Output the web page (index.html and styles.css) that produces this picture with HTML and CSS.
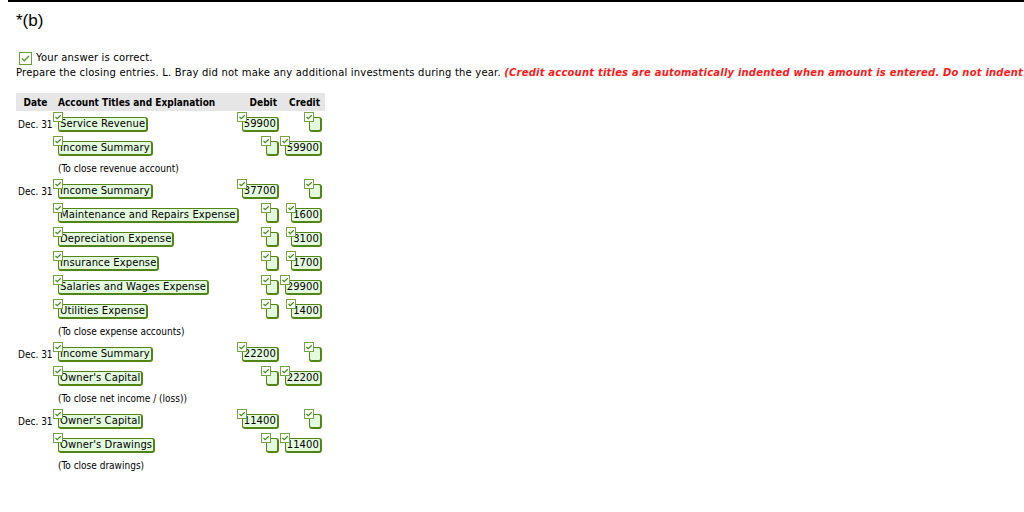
FILE: index.html
```html
<!DOCTYPE html>
<html>
<head>
<meta charset="utf-8">
<link rel="stylesheet" href="styles.css">
</head>
<body>
<div class="page">
  <h2 class="part">*(b)</h2>
  <div class="status">
    <svg class="bigcheck" width="13" height="13" viewBox="0 0 13 13"><rect x="0.5" y="0.5" width="12" height="12" fill="#fff" stroke="#6b9d37"/><path d="M3 6.5 L5.3 8.8 L10 4" fill="none" stroke="#4f9a2a" stroke-width="1.3"/></svg>
    <span>Your answer is correct.</span>
  </div>
  <div class="prompt">Prepare the closing entries. L. Bray did not make any additional investments during the year. <em class="note">(Credit account titles are automatically indented when amount is entered. Do not indent manually.)</em></div>

  <div class="journal">
    <div class="row head">
      <div class="c-date">Date</div>
      <div class="c-acct">Account Titles and Explanation</div>
      <div class="c-money">Debit</div>
      <div class="c-money">Credit</div>
    </div>

    <!-- Entry 1 -->
    <div class="row">
      <div class="c-date">Dec. 31</div>
      <div class="c-acct"><span class="field"><svg class="ok" viewBox="0 0 10 10"><rect x="0.5" y="0.5" width="9" height="9"/><path d="M2.5 5 L4.2 6.7 L7.8 3.2"/></svg>Service Revenue</span></div>
      <div class="c-money"><span class="field"><svg class="ok" viewBox="0 0 10 10"><rect x="0.5" y="0.5" width="9" height="9"/><path d="M2.5 5 L4.2 6.7 L7.8 3.2"/></svg>59900</span></div>
      <div class="c-money"><span class="field empty"><svg class="ok" viewBox="0 0 10 10"><rect x="0.5" y="0.5" width="9" height="9"/><path d="M2.5 5 L4.2 6.7 L7.8 3.2"/></svg></span></div>
    </div>
    <div class="row">
      <div class="c-date"></div>
      <div class="c-acct"><span class="field"><svg class="ok" viewBox="0 0 10 10"><rect x="0.5" y="0.5" width="9" height="9"/><path d="M2.5 5 L4.2 6.7 L7.8 3.2"/></svg>Income Summary</span></div>
      <div class="c-money"><span class="field empty"><svg class="ok" viewBox="0 0 10 10"><rect x="0.5" y="0.5" width="9" height="9"/><path d="M2.5 5 L4.2 6.7 L7.8 3.2"/></svg></span></div>
      <div class="c-money"><span class="field"><svg class="ok" viewBox="0 0 10 10"><rect x="0.5" y="0.5" width="9" height="9"/><path d="M2.5 5 L4.2 6.7 L7.8 3.2"/></svg>59900</span></div>
    </div>
    <div class="row expl"><div></div><div class="c-acct">(To close revenue account)</div></div>

    <!-- Entry 2 -->
    <div class="row">
      <div class="c-date">Dec. 31</div>
      <div class="c-acct"><span class="field"><svg class="ok" viewBox="0 0 10 10"><rect x="0.5" y="0.5" width="9" height="9"/><path d="M2.5 5 L4.2 6.7 L7.8 3.2"/></svg>Income Summary</span></div>
      <div class="c-money"><span class="field"><svg class="ok" viewBox="0 0 10 10"><rect x="0.5" y="0.5" width="9" height="9"/><path d="M2.5 5 L4.2 6.7 L7.8 3.2"/></svg>37700</span></div>
      <div class="c-money"><span class="field empty"><svg class="ok" viewBox="0 0 10 10"><rect x="0.5" y="0.5" width="9" height="9"/><path d="M2.5 5 L4.2 6.7 L7.8 3.2"/></svg></span></div>
    </div>
    <div class="row">
      <div class="c-date"></div>
      <div class="c-acct"><span class="field"><svg class="ok" viewBox="0 0 10 10"><rect x="0.5" y="0.5" width="9" height="9"/><path d="M2.5 5 L4.2 6.7 L7.8 3.2"/></svg>Maintenance and Repairs Expense</span></div>
      <div class="c-money"><span class="field empty"><svg class="ok" viewBox="0 0 10 10"><rect x="0.5" y="0.5" width="9" height="9"/><path d="M2.5 5 L4.2 6.7 L7.8 3.2"/></svg></span></div>
      <div class="c-money"><span class="field"><svg class="ok" viewBox="0 0 10 10"><rect x="0.5" y="0.5" width="9" height="9"/><path d="M2.5 5 L4.2 6.7 L7.8 3.2"/></svg>1600</span></div>
    </div>
    <div class="row">
      <div class="c-date"></div>
      <div class="c-acct"><span class="field"><svg class="ok" viewBox="0 0 10 10"><rect x="0.5" y="0.5" width="9" height="9"/><path d="M2.5 5 L4.2 6.7 L7.8 3.2"/></svg>Depreciation Expense</span></div>
      <div class="c-money"><span class="field empty"><svg class="ok" viewBox="0 0 10 10"><rect x="0.5" y="0.5" width="9" height="9"/><path d="M2.5 5 L4.2 6.7 L7.8 3.2"/></svg></span></div>
      <div class="c-money"><span class="field"><svg class="ok" viewBox="0 0 10 10"><rect x="0.5" y="0.5" width="9" height="9"/><path d="M2.5 5 L4.2 6.7 L7.8 3.2"/></svg>3100</span></div>
    </div>
    <div class="row">
      <div class="c-date"></div>
      <div class="c-acct"><span class="field"><svg class="ok" viewBox="0 0 10 10"><rect x="0.5" y="0.5" width="9" height="9"/><path d="M2.5 5 L4.2 6.7 L7.8 3.2"/></svg>Insurance Expense</span></div>
      <div class="c-money"><span class="field empty"><svg class="ok" viewBox="0 0 10 10"><rect x="0.5" y="0.5" width="9" height="9"/><path d="M2.5 5 L4.2 6.7 L7.8 3.2"/></svg></span></div>
      <div class="c-money"><span class="field"><svg class="ok" viewBox="0 0 10 10"><rect x="0.5" y="0.5" width="9" height="9"/><path d="M2.5 5 L4.2 6.7 L7.8 3.2"/></svg>1700</span></div>
    </div>
    <div class="row">
      <div class="c-date"></div>
      <div class="c-acct"><span class="field"><svg class="ok" viewBox="0 0 10 10"><rect x="0.5" y="0.5" width="9" height="9"/><path d="M2.5 5 L4.2 6.7 L7.8 3.2"/></svg>Salaries and Wages Expense</span></div>
      <div class="c-money"><span class="field empty"><svg class="ok" viewBox="0 0 10 10"><rect x="0.5" y="0.5" width="9" height="9"/><path d="M2.5 5 L4.2 6.7 L7.8 3.2"/></svg></span></div>
      <div class="c-money"><span class="field"><svg class="ok" viewBox="0 0 10 10"><rect x="0.5" y="0.5" width="9" height="9"/><path d="M2.5 5 L4.2 6.7 L7.8 3.2"/></svg>29900</span></div>
    </div>
    <div class="row">
      <div class="c-date"></div>
      <div class="c-acct"><span class="field"><svg class="ok" viewBox="0 0 10 10"><rect x="0.5" y="0.5" width="9" height="9"/><path d="M2.5 5 L4.2 6.7 L7.8 3.2"/></svg>Utilities Expense</span></div>
      <div class="c-money"><span class="field empty"><svg class="ok" viewBox="0 0 10 10"><rect x="0.5" y="0.5" width="9" height="9"/><path d="M2.5 5 L4.2 6.7 L7.8 3.2"/></svg></span></div>
      <div class="c-money"><span class="field"><svg class="ok" viewBox="0 0 10 10"><rect x="0.5" y="0.5" width="9" height="9"/><path d="M2.5 5 L4.2 6.7 L7.8 3.2"/></svg>1400</span></div>
    </div>
    <div class="row expl"><div></div><div class="c-acct">(To close expense accounts)</div></div>

    <!-- Entry 3 -->
    <div class="row">
      <div class="c-date">Dec. 31</div>
      <div class="c-acct"><span class="field"><svg class="ok" viewBox="0 0 10 10"><rect x="0.5" y="0.5" width="9" height="9"/><path d="M2.5 5 L4.2 6.7 L7.8 3.2"/></svg>Income Summary</span></div>
      <div class="c-money"><span class="field"><svg class="ok" viewBox="0 0 10 10"><rect x="0.5" y="0.5" width="9" height="9"/><path d="M2.5 5 L4.2 6.7 L7.8 3.2"/></svg>22200</span></div>
      <div class="c-money"><span class="field empty"><svg class="ok" viewBox="0 0 10 10"><rect x="0.5" y="0.5" width="9" height="9"/><path d="M2.5 5 L4.2 6.7 L7.8 3.2"/></svg></span></div>
    </div>
    <div class="row">
      <div class="c-date"></div>
      <div class="c-acct"><span class="field"><svg class="ok" viewBox="0 0 10 10"><rect x="0.5" y="0.5" width="9" height="9"/><path d="M2.5 5 L4.2 6.7 L7.8 3.2"/></svg>Owner's Capital</span></div>
      <div class="c-money"><span class="field empty"><svg class="ok" viewBox="0 0 10 10"><rect x="0.5" y="0.5" width="9" height="9"/><path d="M2.5 5 L4.2 6.7 L7.8 3.2"/></svg></span></div>
      <div class="c-money"><span class="field"><svg class="ok" viewBox="0 0 10 10"><rect x="0.5" y="0.5" width="9" height="9"/><path d="M2.5 5 L4.2 6.7 L7.8 3.2"/></svg>22200</span></div>
    </div>
    <div class="row expl"><div></div><div class="c-acct">(To close net income / (loss))</div></div>

    <!-- Entry 4 -->
    <div class="row">
      <div class="c-date">Dec. 31</div>
      <div class="c-acct"><span class="field"><svg class="ok" viewBox="0 0 10 10"><rect x="0.5" y="0.5" width="9" height="9"/><path d="M2.5 5 L4.2 6.7 L7.8 3.2"/></svg>Owner's Capital</span></div>
      <div class="c-money"><span class="field"><svg class="ok" viewBox="0 0 10 10"><rect x="0.5" y="0.5" width="9" height="9"/><path d="M2.5 5 L4.2 6.7 L7.8 3.2"/></svg>11400</span></div>
      <div class="c-money"><span class="field empty"><svg class="ok" viewBox="0 0 10 10"><rect x="0.5" y="0.5" width="9" height="9"/><path d="M2.5 5 L4.2 6.7 L7.8 3.2"/></svg></span></div>
    </div>
    <div class="row">
      <div class="c-date"></div>
      <div class="c-acct"><span class="field"><svg class="ok" viewBox="0 0 10 10"><rect x="0.5" y="0.5" width="9" height="9"/><path d="M2.5 5 L4.2 6.7 L7.8 3.2"/></svg>Owner's Drawings</span></div>
      <div class="c-money"><span class="field empty"><svg class="ok" viewBox="0 0 10 10"><rect x="0.5" y="0.5" width="9" height="9"/><path d="M2.5 5 L4.2 6.7 L7.8 3.2"/></svg></span></div>
      <div class="c-money"><span class="field"><svg class="ok" viewBox="0 0 10 10"><rect x="0.5" y="0.5" width="9" height="9"/><path d="M2.5 5 L4.2 6.7 L7.8 3.2"/></svg>11400</span></div>
    </div>
    <div class="row expl"><div></div><div class="c-acct">(To close drawings)</div></div>
  </div>
</div>
</body>
</html>
```

FILE: styles.css
```css
html, body {
  margin: 0;
  padding: 0;
  background: #fff;
  color: #000;
}
body {
  font-family: "DejaVu Sans", Verdana, sans-serif;
  font-size: 10px;
  overflow: hidden;
}
.page {
  margin-left: 8px;
  border-top: 2px solid #000;
  padding-left: 8px;
  overflow: hidden;
}
.part {
  margin: 0;
  padding-top: 9px;
  font-family: "Liberation Sans", Arial, sans-serif;
  font-size: 17px;
  font-weight: normal;
  line-height: 20px;
}
.status {
  display: flex;
  align-items: center;
  gap: 4px;
  margin-top: 20px;
  padding-left: 3px;
  height: 14px;
  line-height: 14px;
  letter-spacing: 0.15px;
}
.bigcheck {
  display: block;
  flex: none;
}
.prompt {
  margin-top: 1px;
  line-height: 14px;
  white-space: nowrap;
  overflow: hidden;
  letter-spacing: 0.2px;
}
.note {
  color: #ff1a1a;
  font-weight: bold;
  font-style: italic;
}
.journal {
  margin-top: 13px;
  width: 309px;
}
.row {
  display: grid;
  grid-template-columns: 39px 182px 45px 43px;
  height: 24px;
  box-sizing: border-box;
  padding-top: 6px;
  align-items: start;
  font-family: "DejaVu Sans Condensed", "DejaVu Sans", sans-serif;
  font-stretch: condensed;
}
.row.head {
  height: 18px;
  padding-top: 0;
  align-items: center;
  background: #e6e6e6;
  font-weight: bold;
}
.row.head .c-date {
  text-align: center;
  padding-left: 0;
}
.row.head .c-acct {
  padding-left: 3px;
}
.row.head .c-money {
  padding-right: 5px;
}
.row.expl {
  height: 19px;
  padding-top: 0;
  align-items: center;
}
.row.expl .c-acct {
  padding-left: 3px;
}
.c-date {
  padding-left: 2px;
  line-height: 15px;
  white-space: nowrap;
}
.c-acct {
  white-space: nowrap;
}
.c-acct .field {
  margin-left: 3px;
}
.c-money {
  text-align: right;
  padding-right: 3px;
}
.field {
  position: relative;
  display: inline-block;
  box-sizing: border-box;
  height: 15px;
  padding: 0 1px 0 1px;
  background: #e3fadf;
  border: 1px solid #528515;
  border-right-width: 2px;
  border-bottom-width: 2px;
  border-radius: 3px;
  font-family: "DejaVu Sans", Verdana, sans-serif;
  font-stretch: normal;
  font-size: 10px;
  line-height: 12px;
  letter-spacing: 0.1px;
  white-space: nowrap;
  text-align: left;
  vertical-align: top;
}
.field.empty {
  width: 13px;
  padding: 0;
}
.ok {
  position: absolute;
  left: -6px;
  top: -6px;
  width: 10px;
  height: 10px;
}
.ok rect {
  fill: #fff;
  stroke: #76a444;
  stroke-width: 1;
}
.ok path {
  fill: none;
  stroke: #3f8f1f;
  stroke-width: 1.2;
}
```
